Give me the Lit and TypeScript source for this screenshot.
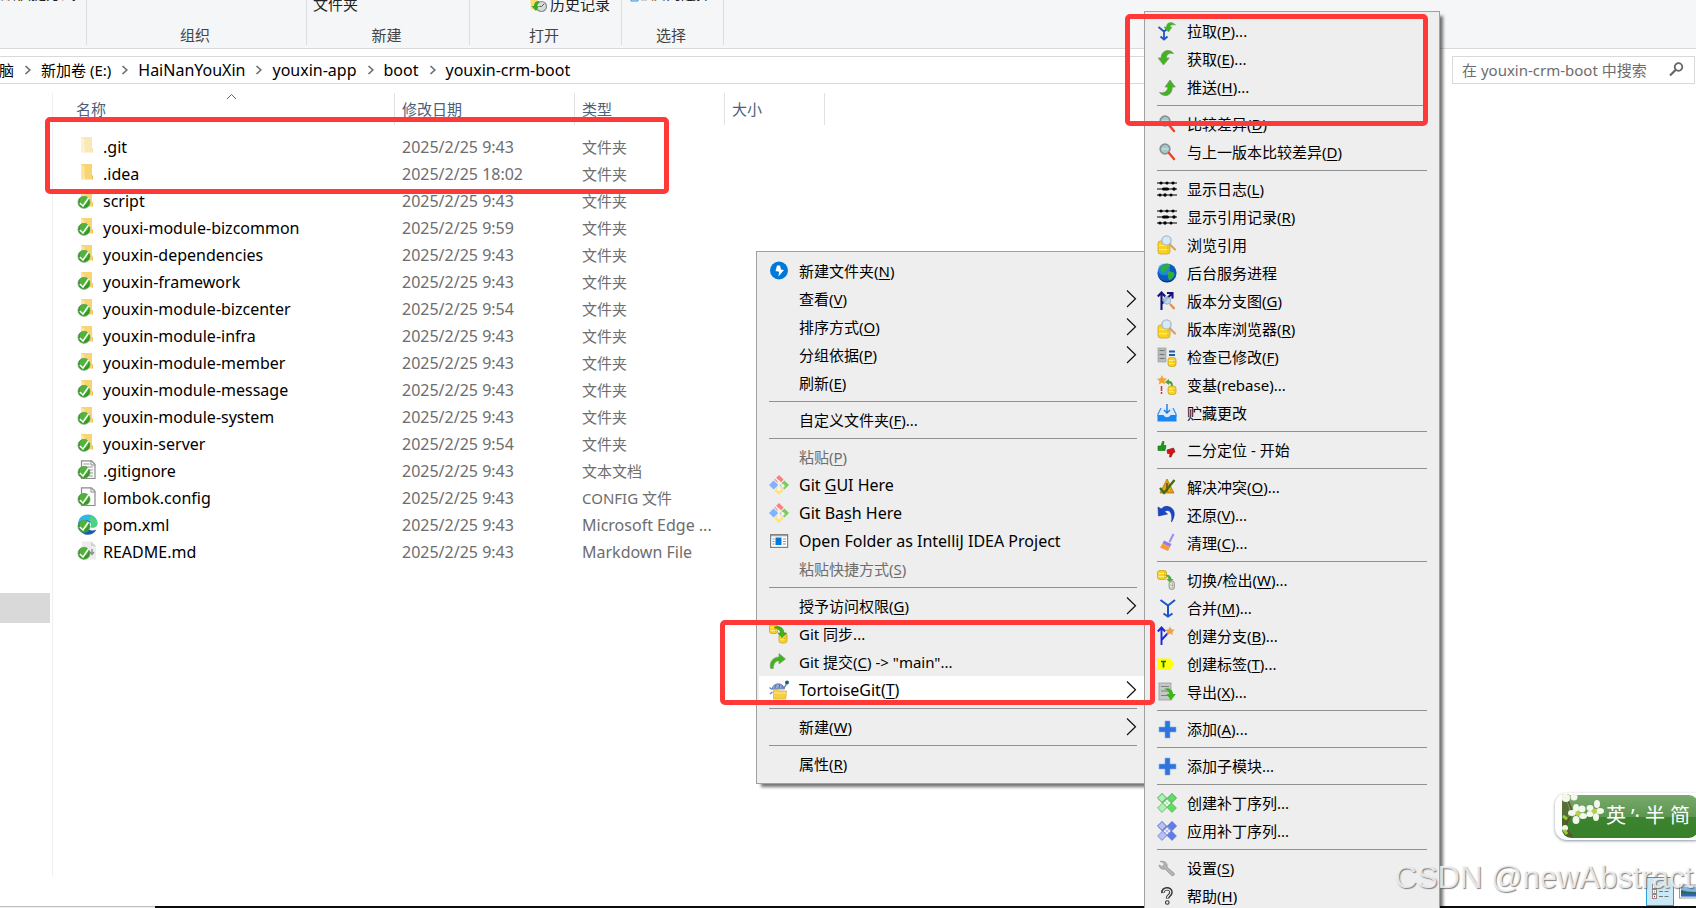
import { LitElement, html, css, svg, nothing, type TemplateResult, type SVGTemplateResult } from "lit";
import { customElement, property } from "lit/decorators.js";
import { classMap } from "lit/directives/class-map.js";

const GREEN = "#3fb51c";

const database = (x: number, y: number, w: number, h: number, color = "#fbd21f", edge = "#c9a227") => svg`
  <rect x=${x} y=${y} width=${w} height=${h} rx="2.5" fill=${color} stroke=${edge} stroke-width=".8"/>
  <path d=${`M${x + 1} ${y + h / 3}h${w - 2}M${x + 1} ${y + (2 * h) / 3}h${w - 2}`} stroke="#fff3a0" stroke-width=".9"/>
  <path d=${`M${x + w - 2} ${y + 2}v${h - 4}`} stroke=${edge} stroke-width=".9" opacity=".6"/>`;

const magnifier = svg`
  <circle cx="8" cy="7" r="4.800" fill="#a3c9c9" stroke="#8b8f90" stroke-width="1.700"/>
  <path d="M4.500 7h7" stroke="#c3dede" stroke-width="1.400"/>
  <path d="M12 11l5 6" stroke="#f0402c" stroke-width="2.400" stroke-linecap="round"/>`;

const commits = svg`
  <path d="M0 4h20M0 10h20M0 16h20" stroke="#000" stroke-width="1.200"/>
  <g fill="#000"><circle cx="4" cy="4" r="1.600"/><circle cx="10" cy="4" r="1.600"/><circle cx="16" cy="4" r="1.600"/>
  <rect x="5" y="8.400" width="7" height="3.200" rx="1.500"/><circle cx="17" cy="10" r="1.700"/>
  <circle cx="3" cy="16" r="1.600"/><circle cx="8" cy="16" r="1.700"/><circle cx="14" cy="16" r="1.500"/></g>`;

const browse = svg`
  ${database(1, 6, 12, 13)}
  <circle cx="9.500" cy="5.500" r="4.600" fill="#d7e9f5" stroke="#a9bccb" stroke-width="1.400"/>
  <path d="M13 9.500l5 5" stroke="#d9a066" stroke-width="2.200" stroke-linecap="round"/>`;

const plus = svg`<path d="M8 2h5v6h6v5h-6v6H8v-6H2V8h6z" fill="#2f73dd" stroke="#7fb0f2" stroke-width=".6"/>`;

const gitLogo = svg`
  <path d="M10 0l4.600 4.600-4.600 4.800-4.600-4.800z" fill="#ff7d7d"/>
  <path d="M4.600 5.400L9.400 10l-4.800 4.600L0 10z" fill="#7fb2ff"/>
  <path d="M15.400 5.400L20 10l-4.600 4.600-4.800-4.600z" fill="#7ccb5d"/>
  <path d="M10 10.600l4.600 4.800L10 20l-4.600-4.600z" fill="#ffe27a"/>
  <path d="M6.500 3.200l3.200 3.200v8M10 7l4 3.600" stroke="#f4f4f4" stroke-width="1.600" fill="none"/>
  <circle cx="10" cy="7" r="1.600" fill="#f4f4f4"/><circle cx="14" cy="11" r="1.700" fill="#f4f4f4"/><circle cx="10" cy="14.400" r="1.700" fill="#f4f4f4"/>`;

const patch = (light: string, dark: string, edge: string) => svg`
  <g stroke=${edge} stroke-width=".7">
    <path d="M5 .6L19.400 15 15 19.400.6 5z" fill=${dark}/>
    <path d="M15 .6L19.400 5 5 19.400.6 15z" fill=${light}/>
    <path d="M10 5.600l4.400 4.400-4.400 4.400L5.600 10z" fill=${light}/>
    <path d="M5 .6L9.400 5 5 9.400.6 5z" fill=${light}/>
    <path d="M15 .6L19.400 5 15 9.400 10.600 5z" fill=${dark}/>
  </g>
  <g fill="#fff"><circle cx="10" cy="8" r=".9"/><circle cx="8" cy="10" r=".9"/><circle cx="12" cy="10" r=".9"/><circle cx="10" cy="12" r=".9"/></g>`;

const ICONS: Record<string, SVGTemplateResult> = {
  none: svg``,
  bolt: svg`<circle cx="10" cy="9.500" r="9" fill="#0078d7"/><path d="M8 4.500h3l1 4 3 .5-5.500 6.500.6-4.700-3.600-.8z" fill="#fff"/>`,
  git: gitLogo,
  idea: svg`<rect x="1.600" y="3.600" width="17" height="12.800" fill="#fff" stroke="#7b8185" stroke-width="1.200"/>
    <path d="M2 4.600h16" stroke="#9ba1a5" stroke-width="1.400"/><path d="M3.500 8h2M3.500 10.500h2M3.500 13h2M14 8h3M14 10.500h3M14 13h3" stroke="#8d9396"/>
    <rect x="6.500" y="6.500" width="6" height="7.500" fill="#0078d7"/>`,
  sync: svg`${database(0.5, 0.5, 8, 9)}${database(10, 9, 8, 10)}
    <path d="M5 3.500C10 1 15 4 14.800 9h2.700l-4.500 4.500L8.800 9h2.700C11.500 6 9 4.500 5 3.500z" fill=${GREEN} stroke="#2c8a12" stroke-width=".6"/>`,
  commit: svg`<path d="M1.500 16.500C0 9 5 5 10 5V1.500L16.500 7 10 12V9C7 8.500 4.500 11 4.300 16.500z" fill=${GREEN} stroke="#7f9f78" stroke-width=".7"/>`,
  tortoise: svg`<path d="M3 9C4 2.500 14 1.500 15.500 9z" fill="#8fa8dc" stroke="#54699f" stroke-width=".7"/>
    <path d="M6 8l1-3M10 8l1-4M13 8l.5-3" stroke="#5a71ad"/><circle cx="18" cy="2.500" r="2" fill="#1f5f7a"/><path d="M15 8l2.500-4" stroke="#5a71ad" stroke-width="1.300"/>
    <path d="M.5 7.500l2.500 2M1 14l2.500-2" stroke="#6b82bd" stroke-width="1.500"/>
    <path d="M4.500 9.500h4l1.500 1.500h7.500l-.8 8H4.500z" fill="#f7cf47" stroke="#d7a92b" stroke-width=".7"/><path d="M5 13h12" stroke="#ffe994"/>`,
  pull: svg`<path d="M1.500 6L7 10.500 10 8M7 10.500V18M3.500 15.500L7 18.500l3.500-3" stroke="#1d55c8" stroke-width="1.800" fill="none"/>
    <path d="M18.500 4C16 .5 9.500.5 9.500 6H7l4.500 5L15 6h-2.200C13 3.800 16 3.300 18.500 4z" fill=${GREEN} stroke="#5fa94c" stroke-width=".6"/>`,
  fetch: svg`<path d="M16.500 4.500C14 0 4.500 0 4 9H1.200L6.500 16l5.700-7H9.300C9.300 5.500 12.500 3.500 16.500 4.500z" fill=${GREEN} stroke="#7d9478" stroke-width=".8"/>`,
  push: svg`<path d="M2.500 15.500c3 4.500 12.500 5 12.800-5.500h3L13 3 8 10h2.800c0 4.500-4 6.500-8.300 5.500z" fill=${GREEN} stroke="#7d9478" stroke-width=".8"/>`,
  diff: magnifier,
  log: commits,
  browse,
  globe: svg`<circle cx="10" cy="10" r="9.600" fill="#0b5bbf"/><circle cx="7" cy="6.500" r="6" fill="#2fa7f0" opacity=".6"/>
    <path d="M4 4c3-3 7-3.500 9-2.500 1 2-1 3-3 4 1 2-2 2-3 4-2 1-4-2-3-5.500zM11 9c3-1 6 0 6.500 2-1 4-4 6-5.500 6-1-2-2-5-1-8z" fill="#2fae3d"/>
    <path d="M2 15a9.600 9.600 0 0 0 16 0c-4 4-12 4-16 0z" fill="#06245c" opacity=".7"/>`,
  graph: svg`<path d="M4.500 19V2M.8 5.500l3.700-4 3.700 4M4.500 13l10-10M10 2h5.500v5.500" stroke="#14147a" stroke-width="2.100" fill="none"/>
    <circle cx="10" cy="9.500" r="3.700" fill="#bcd6e8" opacity=".85" stroke="#8aa6b8"/><path d="M13 13l4.500 5" stroke="#f08a3c" stroke-width="2.200"/>`,
  status: svg`<rect x="1" y="1" width="8" height="14" fill="#b9bdbf" stroke="#8f9496" stroke-width=".6"/><path d="M2.500 3.500h5M2.500 7.500h5M2.500 11.500h5" stroke="#6f7578" stroke-width="1.200"/>
    <path d="M12 4.500h6M12 8h6" stroke="#1a5da8" stroke-width="1.800"/>${database(11, 10.5, 8, 9)}`,
  rebase: svg`<path d="M5 0l1.600 3.300 3.600.4-2.700 2.400.8 3.500L5 7.800 1.700 9.600l.8-3.500L-.2 3.700l3.600-.4z" fill="#f7a531"/>
    <path d="M4.500 11v5M4.500 17v2" stroke="#e5271c" stroke-width="1.500"/>
    <path d="M8 7l4-3v2c3 0 4 2 4 5h-2c0-2-.5-2.500-2-2.500V10z" fill="#49a23a"/>${database(11, 11, 8, 8.5)}`,
  stash: svg`<path d="M4 5l-3 6v2l6 1c1 2.500 5 2.500 6 0l6-1v-2l-3-6" fill="#dcebfb" stroke="#3b91ee" stroke-width="1.200"/>
    <path d="M.5 12h6c1 3 6 3 7 0h6v6.500H.5z" fill="#1a86f2"/><path d="M10 1v9M7 7l3 3 3-3" stroke="#1a7ae0" stroke-width="1.400" fill="none"/>`,
  bisect: svg`<path d="M1 6h3l1.500-4.500h1.500l-.5 4H9l-1 5H1z" fill="#189a1a" stroke="#0c6b10" stroke-width=".6"/>
    <path d="M10 10l6.500-2 1.500 4-2 1-2 4h-1.500l.5-3.500h-2.500z" fill="#d31414" stroke="#8b0a0a" stroke-width=".6"/>`,
  resolve: svg`<path d="M10 2l7 14H3z" fill="#e0a21a" stroke="#a87711" stroke-width=".8"/><path d="M10 6v5M10 12.500v2" stroke="#6b4a08" stroke-width="1.500"/>
    <path d="M3 11l4 5L17.500 3" stroke="#3e6b12" stroke-width="2.300" fill="none"/>`,
  revert: svg`<path d="M1 2l.5 9 9-2-3-2.500C12 3.500 16 7 14.500 17c4.500-7 3.500-14-3.500-15.500C8 1 6 2 4.500 4z" fill="#1a47c4" stroke="#12309a" stroke-width=".6"/>`,
  clean: svg`<path d="M16.500 1l-4 8" stroke="#9b8cf0" stroke-width="2"/><path d="M7 7.500l7.500 3.500-1.500 3-7.500-3.500z" fill="#8f7fe8"/>
    <path d="M5.500 10.500l7.500 3.500-2 4L3 14.500z" fill="#f79a3a"/>`,
  switch: svg`${database(0.5, 0.5, 9, 9)}<path d="M8 5c4-1 6 1 6.500 4h2L13 13 9.500 9h2C11 7 10 6 8 5z" fill="#4fae3b"/>
    ${database(12, 11, 5.5, 8.5, "#c9cbcb", "#8e9192")}`,
  merge: svg`<path d="M3.500 2L11 7.500 18 2M11 7.500V18M6.500 15.500L11 18.500l4.500-3" stroke="#1d55c8" stroke-width="2" fill="none"/>`,
  branch: svg`<path d="M4.500 19V2M.8 5.500l3.700-4 3.700 4M4.500 14l6.500-7" stroke="#1a28e0" stroke-width="1.900" fill="none"/>
    <path d="M13 .5l1.500 2.800 3.200.4-2.300 2.200.6 3.200L13 7.600l-3 1.500.6-3.200-2.300-2.200 3.200-.4z" fill="#f0a148"/>`,
  tag: svg`<path d="M0 4.500h13l4.500 5.500-4.500 6H0z" fill="#ff0"/><path d="M4 7.500h5M6.500 7.500v6" stroke="#0a6b1a" stroke-width="1.700"/>`,
  export: svg`<rect x="2" y="1" width="12" height="17" fill="#c4c8c8" stroke="#8f9595" stroke-width=".7"/><path d="M4 4.500h8M4 9h8M4 13.500h8" stroke="#7b8181" stroke-width="1.200"/>
    <path d="M7 7c5-2 9 1 9 5h2.800L14 18.500 9.500 12h2.700C12 9.500 10 8 7 7z" fill=${GREEN}/>`,
  add: plus,
  patchCreate: patch("#a9f3ad", "#57e25f", "#5f9a63"),
  patchApply: patch("#b3c0f9", "#5f7bee", "#6574b4"),
  settings: svg`<path d="M3 3.500l3.500 1 .5 2.500-2 1.500L2 7c0 3 3 5 6 4l6.500 6.500c2 1 3.500-1 2.500-2.500L10 9c1-3-1.500-7-7-5.500z" fill="#b4b4b4" stroke="#8c8c8c" stroke-width=".6"/>`,
  help: svg`<path d="M6 7C5 1.500 14.500 1.500 14 6.500c-.3 3-3.500 2.700-3.500 6" fill="none" stroke="#333" stroke-width="3.600"/>
    <path d="M6.200 6.500C6 2 14 2 13.800 6.500c-.3 2.800-3.300 2.700-3.300 5.500" fill="none" stroke="#eee" stroke-width="1.200"/><circle cx="10.300" cy="16.500" r="1.800" fill="#eee" stroke="#333" stroke-width="1.100"/>`,
};

const tick = svg`
  <circle cx="7" cy="12.300" r="6" fill="#2f9d20" stroke="#6b9a61" stroke-width=".8"/>
  <circle cx="7" cy="10.500" r="4.300" fill="#69c24e" opacity=".6"/>
  <path d="M2.800 13l3.200 3L11.500 8" stroke="#fff" stroke-width="1.500" fill="none"/>`;

const folder = svg`
  <path d="M4 1h11v11.500h1v4H8z" fill="#f7d573"/><path d="M4 1l3.500 2.500v14L4 16z" fill="#ffe59a"/><path d="M15 12.500h1v4h-1z" fill="#eec25a"/>`;

const sheet = (lines: boolean) => svg`
  <path d="M4.500.8h10L18 4.300v14.200H4.500z" fill="#fbfbfb" stroke="#8c8c8c" stroke-width="1.200"/><path d="M14 1v4h4" fill="none" stroke="#8c8c8c"/>
  ${lines ? svg`<path d="M6.500 4h6M6.500 7h9.500M6.500 10h9.500M10 13h6M12 16h4" stroke="#9a9a9a"/>` : nothing}`;

const FILE_ICONS: Record<string, SVGTemplateResult> = {
  hidden: svg`<g opacity=".5">${folder}</g>`,
  plain: folder,
  folder: svg`${folder}${tick}`,
  text: svg`${sheet(true)}${tick}`,
  config: svg`${sheet(false)}${tick}`,
  edge: svg`<path d="M1 11C1 4 5 .5 11 .5S20.500 5 20.500 9.500c0 4-5 5-7 3.500 2-3-1-6-5-6S2 9 1 11z" fill="#2fb8e6"/>
    <path d="M14 1.200c4 1.300 6.500 4.800 6.500 8.300 0 4-5 5-7 3.500 2.200-3-1-5-1-7s.5-3.500 1.500-4.800z" fill="#5bd868" opacity=".75"/>
    <path d="M1 11C1 6 12 4 13 9c-3-1-4 2-3 4.500 1.500 3.500 6 3.500 9.500 2C17 21 10 22 6 19.500 2.500 17.500 1 14 1 11z" fill="#155fae"/>${tick}`,
  markdown: svg`<path d="M5 .5h9l5 4.500v13.500H5z" fill="#ececec"/><path d="M14 .5V5h5z" fill="#cfcfcf"/><path d="M15 8v5M13 11l2 2.500 2-2.500" stroke="#8c8c8c" stroke-width="1.300" fill="none"/>${tick}`,
};

type Entry = { label: string; icon?: string; sub?: boolean; off?: boolean; active?: boolean } | null;

const MAIN_MENU: Entry[] = [
  { label: "新建文件夹(&N)", icon: "bolt" },
  { label: "查看(&V)", sub: true },
  { label: "排序方式(&O)", sub: true },
  { label: "分组依据(&P)", sub: true },
  { label: "刷新(&E)" },
  null,
  { label: "自定义文件夹(&F)..." },
  null,
  { label: "粘贴(&P)", off: true },
  { label: "Git &GUI Here", icon: "git" },
  { label: "Git Ba&sh Here", icon: "git" },
  { label: "Open Folder as IntelliJ IDEA Project", icon: "idea" },
  { label: "粘贴快捷方式(&S)", off: true },
  null,
  { label: "授予访问权限(&G)", sub: true },
  { label: "Git 同步...", icon: "sync" },
  { label: 'Git 提交(&C) -> "main"...', icon: "commit" },
  { label: "TortoiseGit(&T)", icon: "tortoise", sub: true, active: true },
  null,
  { label: "新建(&W)", sub: true },
  null,
  { label: "属性(&R)" },
];

const GIT_MENU: Entry[] = [
  { label: "拉取(&P)...", icon: "pull" },
  { label: "获取(&E)...", icon: "fetch" },
  { label: "推送(&H)...", icon: "push" },
  null,
  { label: "比较差异(&D)", icon: "diff" },
  { label: "与上一版本比较差异(&D)", icon: "diff" },
  null,
  { label: "显示日志(&L)", icon: "log" },
  { label: "显示引用记录(&R)", icon: "log" },
  { label: "浏览引用", icon: "browse" },
  { label: "后台服务进程", icon: "globe" },
  { label: "版本分支图(&G)", icon: "graph" },
  { label: "版本库浏览器(&R)", icon: "browse" },
  { label: "检查已修改(&F)", icon: "status" },
  { label: "变基(rebase)...", icon: "rebase" },
  { label: "贮藏更改", icon: "stash" },
  null,
  { label: "二分定位 - 开始", icon: "bisect" },
  null,
  { label: "解决冲突(&O)...", icon: "resolve" },
  { label: "还原(&V)...", icon: "revert" },
  { label: "清理(&C)...", icon: "clean" },
  null,
  { label: "切换/检出(&W)...", icon: "switch" },
  { label: "合并(&M)...", icon: "merge" },
  { label: "创建分支(&B)...", icon: "branch" },
  { label: "创建标签(&T)...", icon: "tag" },
  { label: "导出(&X)...", icon: "export" },
  null,
  { label: "添加(&A)...", icon: "add" },
  null,
  { label: "添加子模块...", icon: "add" },
  null,
  { label: "创建补丁序列...", icon: "patchCreate" },
  { label: "应用补丁序列...", icon: "patchApply" },
  null,
  { label: "设置(&S)", icon: "settings" },
  { label: "帮助(&H)", icon: "help" },
];

const FILES: [string, string, string, string][] = [
  [".git", "2025/2/25 9:43", "文件夹", "hidden"],
  [".idea", "2025/2/25 18:02", "文件夹", "plain"],
  ["script", "2025/2/25 9:43", "文件夹", "folder"],
  ["youxi-module-bizcommon", "2025/2/25 9:59", "文件夹", "folder"],
  ["youxin-dependencies", "2025/2/25 9:43", "文件夹", "folder"],
  ["youxin-framework", "2025/2/25 9:43", "文件夹", "folder"],
  ["youxin-module-bizcenter", "2025/2/25 9:54", "文件夹", "folder"],
  ["youxin-module-infra", "2025/2/25 9:43", "文件夹", "folder"],
  ["youxin-module-member", "2025/2/25 9:43", "文件夹", "folder"],
  ["youxin-module-message", "2025/2/25 9:43", "文件夹", "folder"],
  ["youxin-module-system", "2025/2/25 9:43", "文件夹", "folder"],
  ["youxin-server", "2025/2/25 9:54", "文件夹", "folder"],
  [".gitignore", "2025/2/25 9:43", "文本文档", "text"],
  ["lombok.config", "2025/2/25 9:43", "CONFIG 文件", "config"],
  ["pom.xml", "2025/2/25 9:43", "Microsoft Edge ...", "edge"],
  ["README.md", "2025/2/25 9:43", "Markdown File", "markdown"],
];

/** Latin-only strings are set one step larger than Chinese ones so both read at the same size. */
const isLatin = (text: string) => /^[ -~]+$/.test(text);

/** Turns "&X" in a caption into an underlined access key. */
function caption(label: string): TemplateResult {
  const at = label.indexOf("&");
  return at < 0
    ? html`<span>${label}</span>`
    : html`<span>${label.slice(0, at)}<u>${label[at + 1]}</u>${label.slice(at + 2)}</span>`;
}

@customElement("context-menu")
export class ContextMenu extends LitElement {
  @property({ attribute: false }) entries: Entry[] = [];

  static styles = css`
    :host {
      display: block;
      box-sizing: border-box;
      padding: 5px 2px;
      background: #eee;
      border: 1px solid #a0a0a0;
      box-shadow: 4px 4px 3px -1px rgba(0, 0, 0, 0.55);
    }
    .item {
      display: flex;
      align-items: center;
      gap: 10px;
      width: 100%;
      height: 28px;
      padding: 0 10px;
      border: 0;
      background: none;
      color: #000;
      font: inherit;
      text-align: left;
      white-space: nowrap;
    }
    .item.latin {
      font-size: 16px;
    }
    .item.active {
      background: #fff;
    }
    .item:disabled {
      color: #6d6d6d;
    }
    .icon {
      flex: none;
      width: 20px;
      height: 20px;
    }
    .arrow {
      flex: none;
      width: 12px;
      height: 18px;
      margin-left: auto;
    }
    .rule {
      height: 1px;
      margin: 4px 10px;
      border: 0;
      background: #919191;
    }
    u {
      text-decoration-thickness: 1px;
      text-underline-offset: 2px;
    }
  `;

  render() {
    return html`<div role="menu">
      ${this.entries.map((e) =>
        e
          ? html`<button
              class=${classMap({ item: true, active: !!e.active, latin: isLatin(e.label) })}
              role="menuitem"
              ?disabled=${e.off}
            >
              <svg class="icon" viewBox="0 0 20 20" fill="none" aria-hidden="true">${ICONS[e.icon ?? "none"]}</svg>
              ${caption(e.label)}
              ${e.sub
                ? html`<svg class="arrow" viewBox="0 0 12 18" aria-hidden="true">
                    <path d="M2 .5l8.500 8.200L2 17" fill="none" stroke="#111" stroke-width="1.200" />
                  </svg>`
                : nothing}
            </button>`
          : html`<hr class="rule" />`
      )}
    </div>`;
  }
}

@customElement("app-root")
export class AppRoot extends LitElement {
  static styles = css`
    :host {
      display: flex;
      flex-direction: column;
      position: relative;
      height: 100vh;
      overflow: hidden;
      background: #fff;
      color: #000;
      font: 15px/20px "Noto Sans", "Noto Sans CJK SC", sans-serif;
    }
    button {
      padding: 0;
      border: 0;
      background: none;
      color: inherit;
      font: inherit;
      white-space: nowrap;
    }
    .latin {
      font-size: 16px;
    }
    .ribbon {
      display: flex;
      flex: none;
      height: 48px;
      border-bottom: 1px solid #d9dadb;
      background: #f5f6f7;
      color: #444;
    }
    .group {
      display: flex;
      flex-direction: column;
      justify-content: flex-end;
      align-items: center;
      box-sizing: border-box;
      flex: none;
      height: 45px;
      overflow: hidden;
      border-right: 1px solid #dcdddf;
    }
    .commands {
      display: flex;
      flex: none;
      align-items: center;
      gap: 3px;
      align-self: stretch;
      height: 20px;
      margin-bottom: 11px;
      color: #222;
    }
    .commands.high {
      margin-bottom: 22px;
    }
    .group-name {
      flex: none;
      height: 20px;
      margin-right: 3px;
    }
    .clip-group { width: 87px; }
    .clip-group .commands { justify-content: flex-end; padding-right: 10px; }
    .organize-group { width: 220px; }
    .new-group { width: 163px; }
    .new-group .commands { padding-left: 6px; }
    .open-group { width: 152px; }
    .open-group .commands { padding-left: 59px; }
    .select-group { width: 102px; }
    .select-group .commands { padding-left: 8px; }
    .ribbon svg { width: 18px; height: 18px; flex: none; }

    .address {
      display: flex;
      flex: none;
      gap: 14px;
      padding: 7px 1px 0 0;
    }
    .crumbs {
      display: flex;
      align-items: center;
      flex: 1;
      box-sizing: border-box;
      height: 28px;
      margin-left: -1px;
      padding-bottom: 1px;
      border: 1px solid #d9d9d9;
      border-left: 0;
    }
    .crumbs a {
      color: inherit;
      text-decoration: none;
      white-space: nowrap;
    }
    .crumbs svg {
      width: 27px;
      height: 10px;
      flex: none;
    }
    .search {
      display: flex;
      align-items: center;
      box-sizing: border-box;
      width: 243px;
      height: 28px;
      padding: 0 10px 1px 9px;
      border: 1px solid #d9d9d9;
    }
    .search input {
      flex: 1;
      min-width: 0;
      padding: 0;
      border: 0;
      outline: 0;
      background: none;
      font: inherit;
    }
    .search input::placeholder {
      color: #6d6d6d;
      opacity: 1;
    }
    .search svg {
      width: 15px;
      height: 15px;
      flex: none;
    }

    .body {
      display: flex;
      flex: 1;
      min-height: 0;
      padding-top: 9px;
    }
    .nav {
      flex: none;
      width: 53px;
      padding-top: 500px;
      box-sizing: border-box;
      border-right: 1px solid #f0f0f0;
    }
    .nav-selected {
      width: 50px;
      height: 30px;
      background: #d9d9d9;
    }
    table {
      align-self: flex-start;
      width: 772px;
      border-collapse: separate;
      border-spacing: 0;
      table-layout: fixed;
    }
    .col-name { width: 342px; }
    .col-date { width: 180px; }
    .col-type { width: 150px; }
    .col-size { width: 100px; }
    th {
      position: relative;
      height: 32px;
      padding: 0 0 0 7px;
      box-sizing: border-box;
      border-right: 1px solid #e2e2e2;
      color: #4c607a;
      font-weight: 400;
      text-align: left;
    }
    th:first-child {
      padding-left: 23px;
    }
    .sort {
      position: absolute;
      top: 0;
      left: 173px;
      width: 11px;
      height: 7px;
    }
    tbody::before {
      content: "";
      display: block;
      height: 8px;
    }
    td {
      height: 27px;
      padding: 0 0 0 7px;
      color: #6d6d6d;
      white-space: nowrap;
    }
    td:first-child {
      padding-left: 24px;
      color: #000;
    }
    .file {
      display: flex;
      align-items: center;
      gap: 4px;
    }
    .file svg {
      flex: none;
      width: 22px;
      height: 22px;
    }

    .status {
      display: flex;
      justify-content: flex-end;
      flex: none;
      height: 29px;
      gap: 5px;
    }
    .view {
      display: flex;
      align-items: center;
      justify-content: center;
      box-sizing: border-box;
      width: 28px;
      height: 29px;
      border: 1px solid #26a0da;
      background: #cbe8f6;
    }
    .view.thumbs {
      width: 17px;
      border: 0;
      background: none;
      overflow: hidden;
      justify-content: flex-start;
      align-items: flex-start;
      padding-top: 4px;
    }
    .view svg { width: 20px; height: 20px; flex: none; }
    .edge {
      display: flex;
      flex: none;
      height: 2px;
      background: #0b0b0d;
    }
    .edge-light {
      box-sizing: border-box;
      width: 155px;
      height: 2px;
      border-top: 1px solid #bfbfbf;
      background: #f0f0f0;
    }

    .main-menu {
      position: absolute;
      top: 251px;
      left: 756px;
      width: 394px;
    }
    .git-menu {
      position: absolute;
      top: 11px;
      left: 1144px;
      width: 296px;
    }
    .mark {
      position: absolute;
      box-sizing: border-box;
      border: 5px solid #ff3838;
      border-radius: 5px;
      pointer-events: none;
    }
    .mark-files { left: 45px; top: 117px; width: 624px; height: 77px; }
    .mark-git { left: 720px; top: 620px; width: 435px; height: 85px; }
    .mark-remote { left: 1125px; top: 14px; width: 303px; height: 112px; }

    .ime {
      position: absolute;
      left: 1555px;
      top: 793px;
      display: flex;
      box-sizing: border-box;
      width: 150px;
      height: 47px;
      padding: 2px 0 2px 7px;
      border-radius: 12px;
      background: #fff;
      box-shadow: 0 1px 3px #8a97a0;
    }
    .ime-face {
      display: flex;
      align-items: center;
      gap: 5px;
      box-sizing: border-box;
      width: 136px;
      height: 43px;
      padding-bottom: 2px;
      border-radius: 9px;
      background: linear-gradient(#79a96c, #5c9650 50%, #3d842f 51%, #377f29);
      color: #fff;
      font-size: 20px;
      line-height: 24px;
    }
    .ime-face svg { width: 42px; height: 43px; flex: none; margin-right: -3px; }
    .watermark {
      position: absolute;
      right: 3px;
      bottom: 10px;
      font: 31px/40px "Liberation Sans", Arial, sans-serif;
      color: rgba(245, 245, 245, 0.85);
      text-shadow: 1px 1px 1px rgba(90, 90, 90, 0.75);
      white-space: nowrap;
      pointer-events: none;
    }
  `;

  private chevron() {
    return html`<svg viewBox="0 0 27 10" aria-hidden="true"><path d="M11.500 1l4.300 4-4.300 4" fill="none" stroke="#707070" stroke-width="1.700" /></svg>`;
  }

  private ribbon() {
    return html`<header class="ribbon">
      <div class="group clip-group"><div class="commands high"><button>粘贴快捷方式</button></div><span class="group-name"></span></div>
      <div class="group organize-group"><span class="group-name">组织</span></div>
      <div class="group new-group"><div class="commands"><button>文件夹</button></div><span class="group-name">新建</span></div>
      <div class="group open-group">
        <div class="commands">
          <svg viewBox="0 0 18 18" aria-hidden="true">
            <path d="M1 0h8v16l-7-2z" fill="#fbd976" />
            <circle cx="12.500" cy="11.500" r="5" fill="#d9dcdd" stroke="#8a8d8f" stroke-width="1.200" />
            <path d="M12.500 11.500l2.500-2.500M12.500 11.500h-2" stroke="#555" />
            <path d="M10 6c-4 0-5 3-5 5H2.500L7 16l3-5H8c0-2 1-3 3-3.500z" fill="#3aa823" />
          </svg>
          <button>历史记录</button>
        </div>
        <span class="group-name">打开</span>
      </div>
      <div class="group select-group">
        <div class="commands high">
          <svg viewBox="0 0 18 18" aria-hidden="true">
            <path d="M1 8h7v9H1z" fill="#cfe7fa" stroke="#3c96dc" /><path d="M11 8h6v8h-6z" fill="#fff" stroke="#a5a5a5" />
          </svg>
          <button>反向选择</button>
        </div>
        <span class="group-name">选择</span>
      </div>
    </header>`;
  }

  render() {
    const crumbs = ["脑", "新加卷 (E:)", "HaiNanYouXin", "youxin-app", "boot", "youxin-crm-boot"];
    return html`
      ${this.ribbon()}
      <div class="address">
        <nav class="crumbs">
          ${crumbs.map((c, i) => html`${i ? this.chevron() : nothing}<a href="#" class=${classMap({ latin: isLatin(c) })}>${c}</a>`)}
        </nav>
        <label class="search">
          <input type="text" aria-label="搜索" placeholder="在 youxin-crm-boot 中搜索" />
          <svg viewBox="0 0 15 15" aria-hidden="true">
            <circle cx="9.500" cy="5" r="3.800" fill="none" stroke="#666" stroke-width="1.800" /><path d="M6.800 7.800L1 13.500" stroke="#666" stroke-width="2.200" />
          </svg>
        </label>
      </div>
      <main class="body">
        <div class="nav"><div class="nav-selected"></div></div>
        <table>
          <colgroup><col class="col-name" /><col class="col-date" /><col class="col-type" /><col class="col-size" /></colgroup>
          <thead>
            <tr>
              <th>
                <button>名称</button>
                <svg class="sort" viewBox="0 0 11 7" aria-hidden="true"><path d="M1 6l4.500-4.500L10 6" fill="none" stroke="#666" /></svg>
              </th>
              <th><button>修改日期</button></th>
              <th><button>类型</button></th>
              <th><button>大小</button></th>
            </tr>
          </thead>
          <tbody>
            ${FILES.map(
              ([name, date, type, icon]) => html`<tr>
                <td class="latin"><div class="file"><svg viewBox="0 0 22 22" fill="none" aria-hidden="true">${FILE_ICONS[icon]}</svg><span>${name}</span></div></td>
                <td class="latin">${date}</td>
                <td class=${classMap({ latin: isLatin(type) })}>${type}</td>
                <td></td>
              </tr>`
            )}
          </tbody>
        </table>
      </main>
      <footer class="status">
        <button class="view" aria-label="详细信息">
          <svg viewBox="0 0 20 20" aria-hidden="true">
            <g fill="#fff" stroke="#8a8a8a"><rect x="2.500" y="2.500" width="4" height="4" /><rect x="2.500" y="7.500" width="4" height="4" /><rect x="2.500" y="12.500" width="4" height="4" /></g>
            <path d="M4 4.500h1" stroke="#3a7" stroke-width="1.500" /><path d="M4 9.500h1" stroke="#c80" stroke-width="1.500" /><path d="M4 14.500h1" stroke="#c22" stroke-width="1.500" />
            <path d="M9 4.500h4M14.500 4.500h4M9 9.500h4M14.500 9.500h4M9 14.500h4M14.500 14.500h4" stroke="#777" />
          </svg>
        </button>
        <button class="view thumbs" aria-label="大图标">
          <svg viewBox="0 0 20 20" aria-hidden="true">
            <rect x=".5" y="4" width="19" height="13" fill="#fff" stroke="#9a9a9a" /><path d="M2 5.500h16v10H2z" fill="#7fb7ea" />
            <path d="M2 9l6 1.500 10 .5v2H2z" fill="#2c6b4e" /><path d="M2 13h16v2.500H2z" fill="#3566b5" />
          </svg>
        </button>
      </footer>
      <div class="edge"><div class="edge-light"></div></div>

      <context-menu class="main-menu" .entries=${MAIN_MENU}></context-menu>
      <context-menu class="git-menu" .entries=${GIT_MENU}></context-menu>

      <div class="mark mark-files"></div>
      <div class="mark mark-git"></div>
      <div class="mark mark-remote"></div>

      <div class="ime">
        <div class="ime-face">
          <svg viewBox="0 0 42 43" aria-hidden="true">
            <path d="M1 0c4 10 8 12 5 22s0 15 5 21H8a8 8 0 0 1-8-8V8z" fill="#4d5b28" opacity=".7" />
            <path d="M6 0c-3 8 6 12 3 20s-9 12 1 22" fill="none" stroke="#6b4a2a" stroke-width="1.500" />
            <g fill="#f4f8ec">
              <circle cx="4" cy="4" r="4" /><circle cx="12" cy="3" r="3.500" />
              <ellipse cx="10" cy="19" rx="4" ry="3" /><ellipse cx="14" cy="14" rx="3" ry="4" /><ellipse cx="20" cy="15" rx="3.500" ry="3.500" /><ellipse cx="21" cy="22" rx="4" ry="3" /><ellipse cx="14" cy="26" rx="3.500" ry="4" />
              <ellipse cx="28" cy="14" rx="3.500" ry="3" /><ellipse cx="35" cy="10" rx="3" ry="4" /><ellipse cx="38" cy="17" rx="4" ry="3" /><ellipse cx="34" cy="23" rx="3" ry="4" /><ellipse cx="28" cy="20" rx="3.500" ry="3" />
              <circle cx="3" cy="34" r="3" />
            </g>
            <circle cx="16" cy="19.500" r="2.500" fill="#b8cf4a" /><circle cx="32.500" cy="17" r="2.500" fill="#b8cf4a" />
            <path d="M1 22l4 3M2 36l3 4" stroke="#9ccc3c" stroke-width="3" />
          </svg>
          <span>英</span><span>’·</span><span>半</span><span>简</span>
        </div>
      </div>
      <div class="watermark">CSDN @newAbstract</div>
    `;
  }
}
